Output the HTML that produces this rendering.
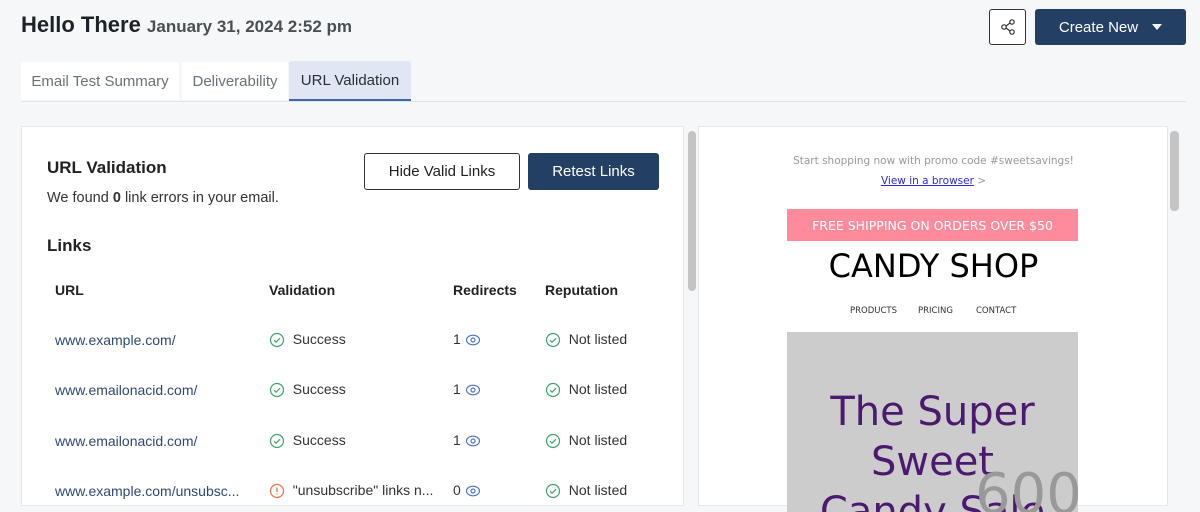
<!DOCTYPE html>
<html><head><style>
*{box-sizing:border-box;margin:0;padding:0}
body{width:1200px;height:497px;overflow:hidden;background:#f6f7f9;font-family:"Liberation Sans",sans-serif;position:relative;color:#222}
.a{position:absolute;white-space:nowrap}
.btn{position:absolute;border-radius:3px;display:flex;align-items:center;justify-content:center;font-size:15px}
.th{font-size:14px;font-weight:bold;color:#222}
.td{font-size:14px;color:#333}
.url{color:#2d4a72}
svg{display:inline-block;vertical-align:middle}
</style></head><body>
<div class="a" style="left:21px;top:12px;font-size:22px;font-weight:bold;color:#1d2228">Hello There <span style="font-size:17px;color:#4a4f55">January 31, 2024 2:52 pm</span></div>

<div class="btn" style="left:989px;top:9px;width:37px;height:36px;border:1px solid #333;background:#fff">
<svg width="16" height="16" viewBox="0 0 16 16" fill="none" stroke="#333" stroke-width="1.2"><circle cx="12" cy="3" r="2.2"/><circle cx="4" cy="8" r="2.2"/><circle cx="12" cy="13" r="2.2"/><path d="M6 7l4-3M6 9l4 3"/></svg></div>
<div class="btn" style="left:1035px;top:9px;width:151px;height:36px;background:#233f63;color:#fff">Create New<span style="margin-left:14px;border-left:5px solid transparent;border-right:5px solid transparent;border-top:6px solid #fff"></span></div>

<div class="a" style="left:21px;top:62px;width:158px;height:38px;background:#fff;font-size:15px;color:#6b7178;display:flex;align-items:center;justify-content:center">Email Test Summary</div>
<div class="a" style="left:182px;top:62px;width:106px;height:38px;background:#fff;font-size:15px;color:#6b7178;display:flex;align-items:center;justify-content:center">Deliverability</div>
<div class="a" style="left:289px;top:61px;width:122px;height:40px;background:#e1e6f5;border-bottom:2px solid #3a68ad;border-radius:3px 3px 0 0;font-size:15px;color:#2a2f35;display:flex;align-items:center;justify-content:center">URL Validation</div>
<div class="a" style="left:21px;top:101px;width:1165px;height:1px;background:#e1e3e6"></div>

<div class="a" style="left:21px;top:126px;width:663px;height:380px;background:#fff;border:1px solid #e6e7e9"></div>
<div class="a" style="left:688px;top:131px;width:8px;height:160px;background:#c4c4c4;border-radius:4px"></div>
<div class="a" style="left:698px;top:126px;width:470px;height:380px;background:#fff;border:1px solid #e6e7e9"></div>
<div class="a" style="left:1170px;top:131px;width:9px;height:80px;background:#c4c4c4;border-radius:4px"></div>

<div class="a" style="left:47px;top:158px;font-size:17px;font-weight:bold">URL Validation</div>
<div class="a" style="left:47px;top:190px;font-size:14.5px;color:#333">We found <b>0</b> link errors in your email.</div>
<div class="btn" style="left:364px;top:153px;width:156px;height:37px;border:1px solid #333;background:#fff;color:#222">Hide Valid Links</div>
<div class="btn" style="left:528px;top:153px;width:131px;height:37px;background:#233f63;color:#fff">Retest Links</div>
<div class="a" style="left:47px;top:236px;font-size:17px;font-weight:bold">Links</div>

<div class="a th" style="left:55px;top:282px">URL</div>
<div class="a th" style="left:269px;top:282px">Validation</div>
<div class="a th" style="left:453px;top:282px">Redirects</div>
<div class="a th" style="left:545px;top:282px">Reputation</div>

<svg width="0" height="0" style="position:absolute"><defs>
<g id="ok"><circle cx="8" cy="8" r="6.5" fill="none" stroke="#3fa36b" stroke-width="1.2"/><path d="M5 8.2l2 2 4-4" fill="none" stroke="#3fa36b" stroke-width="1.2"/></g>
<g id="eye"><ellipse cx="8" cy="8" rx="6.5" ry="4.8" fill="none" stroke="#4f78c4" stroke-width="1.2"/><circle cx="8" cy="8" r="2" fill="none" stroke="#4f78c4" stroke-width="1.2"/></g>
</defs></svg>

<div class="a td url" style="left:55px;top:332px">www.example.com/</div>
<div class="a td" style="left:269px;top:331px"><svg width="16" height="16"><use href="#ok"/></svg> &nbsp;Success</div>
<div class="a td" style="left:453px;top:331px">1 <svg width="16" height="16"><use href="#eye"/></svg></div>
<div class="a td" style="left:545px;top:331px"><svg width="16" height="16"><use href="#ok"/></svg> &nbsp;Not listed</div>

<div class="a td url" style="left:55px;top:382px">www.emailonacid.com/</div>
<div class="a td" style="left:269px;top:381px"><svg width="16" height="16"><use href="#ok"/></svg> &nbsp;Success</div>
<div class="a td" style="left:453px;top:381px">1 <svg width="16" height="16"><use href="#eye"/></svg></div>
<div class="a td" style="left:545px;top:381px"><svg width="16" height="16"><use href="#ok"/></svg> &nbsp;Not listed</div>

<div class="a td url" style="left:55px;top:433px">www.emailonacid.com/</div>
<div class="a td" style="left:269px;top:432px"><svg width="16" height="16"><use href="#ok"/></svg> &nbsp;Success</div>
<div class="a td" style="left:453px;top:432px">1 <svg width="16" height="16"><use href="#eye"/></svg></div>
<div class="a td" style="left:545px;top:432px"><svg width="16" height="16"><use href="#ok"/></svg> &nbsp;Not listed</div>

<div class="a td url" style="left:55px;top:483px">www.example.com/unsubsc...</div>
<div class="a td" style="left:269px;top:482px"><svg width="16" height="16"><circle cx="8" cy="8" r="6.5" fill="none" stroke="#e8704e" stroke-width="1.2"/><path d="M8 4.5v4.5M8 10.5v1" stroke="#e8704e" stroke-width="1.3"/></svg> &nbsp;"unsubscribe" links n...</div>
<div class="a td" style="left:453px;top:482px">0 <svg width="16" height="16"><use href="#eye"/></svg></div>
<div class="a td" style="left:545px;top:482px"><svg width="16" height="16"><use href="#ok"/></svg> &nbsp;Not listed</div>

<div class="a" style="left:699px;width:469px;top:155px;text-align:center;font-family:'DejaVu Sans',sans-serif;font-size:10.5px;color:#999">Start shopping now with promo code #sweetsavings!</div>
<div class="a" style="left:699px;width:469px;top:175px;text-align:center;font-family:'DejaVu Sans',sans-serif;font-size:10.5px;color:#999"><span style="color:#2a2ae0;text-decoration:underline">View in a browser</span> &gt;</div>
<div class="a" style="left:787px;top:209px;width:291px;height:32px;background:#fe8b9c;color:#fff;font-family:'DejaVu Sans',sans-serif;font-size:12.5px;display:flex;align-items:center;justify-content:center">FREE SHIPPING ON ORDERS OVER $50</div>
<div class="a" style="left:699px;width:469px;top:247px;text-align:center;font-family:'DejaVu Sans',sans-serif;font-size:32px;color:#000">CANDY SHOP</div>
<div class="a" style="left:850px;top:306px;font-family:'DejaVu Sans',sans-serif;font-size:8.5px;color:#333">PRODUCTS</div>
<div class="a" style="left:918px;top:306px;font-family:'DejaVu Sans',sans-serif;font-size:8.5px;color:#333">PRICING</div>
<div class="a" style="left:976px;top:306px;font-family:'DejaVu Sans',sans-serif;font-size:8.5px;color:#333">CONTACT</div>
<div class="a" style="left:787px;top:332px;width:291px;height:180px;background:#cccccc;overflow:hidden">
<div class="a" style="left:0;width:291px;top:55px;text-align:center;font-family:'DejaVu Sans',sans-serif;font-size:40px;color:#4b1a6e;line-height:50px">The Super<br>Sweet<br>Candy Sale</div>
<div class="a" style="left:188px;top:130px;font-family:'DejaVu Sans',sans-serif;font-size:56px;color:#999">600</div>
</div>
</body></html>
